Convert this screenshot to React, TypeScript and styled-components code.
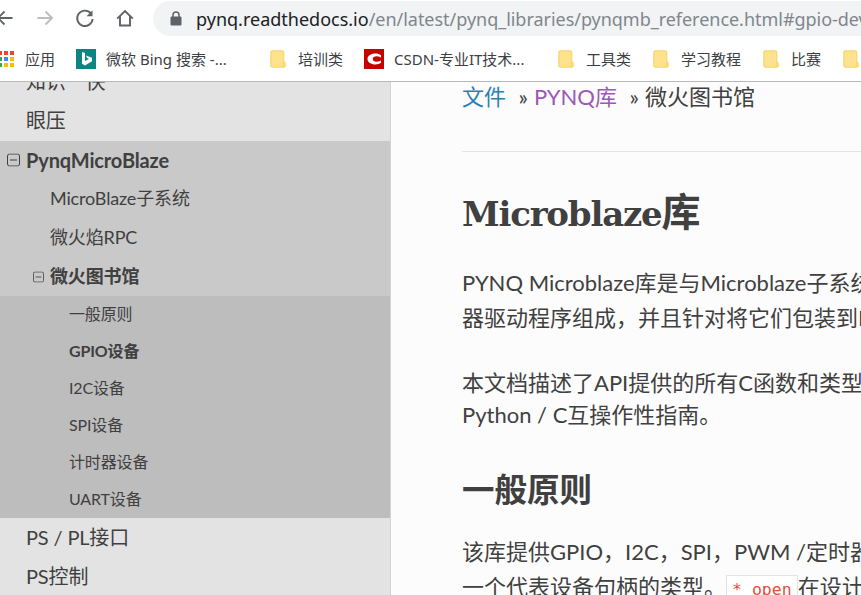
import React from 'react';
import styled, { createGlobalStyle } from 'styled-components';

const UI_FONT = '"Noto Sans", "Noto Sans CJK SC", sans-serif';
const DOC_FONT = 'Lato, "Noto Sans CJK SC", sans-serif';

const GlobalStyle = createGlobalStyle`
   html,
   body {
      margin: 0;
      height: 100%;
      overflow: hidden;
      background: #fcfcfc;
   }
`;

const folders = ['工具类', '学习教程', '比赛'];

const Folder = () => (
   <FolderIcon viewBox="0 0 16 18">
      <path
         d="M2 .8h10.5c.8 0 1.3.5 1.3 1.3v10h.4c.8 0 1 .5 1 1.2v2.9c0 .7-.5 1-1 1H2c-.8 0-1.2-.5-1.2-1.2V2C.8 1.3 1.2.8 2 .8z"
         fill="#fee28d"
         stroke="#f6d365"
         strokeWidth="1"
      />
      <path d="M13.2 16.5v-3c0-.7.3-1.2 1-1.2" fill="none" stroke="#f6d365" strokeWidth="1" />
   </FolderIcon>
);

const FoldMark = ({ small }: { small?: boolean }) => (
   <FoldIcon $small={small} viewBox="0 0 13 13">
      <rect x="0.5" y="0.5" width="12" height="12" rx="2" fill="none" stroke="#404040" strokeWidth="1" />
      <path d="M3 6.5h7" stroke="#404040" strokeWidth="1" />
   </FoldIcon>
);

const App = () => {
   return (
      <Page>
         <GlobalStyle />
         <Toolbar>
            <NavButton>
               <svg width="20" height="20" viewBox="0 0 20 20" fill="none" stroke="#5f6368" strokeWidth="1.9">
                  <path d="M17.5 10H3.5M9.5 3.5L3 10l6.500 6.500" />
               </svg>
            </NavButton>
            <NavButton>
               <svg width="20" height="20" viewBox="0 0 20 20" fill="none" stroke="#bcbec1" strokeWidth="1.9">
                  <path d="M2.500 10h14M10.500 3.500L17 10l-6.500 6.500" />
               </svg>
            </NavButton>
            <NavButton>
               <svg width="20" height="20" viewBox="0 0 20 20" fill="none" stroke="#5f6368" strokeWidth="1.9">
                  <path d="M16 5.600A7.700 7.700 0 1 0 17.600 11" />
                  <path d="M17.500 2.200v6h-6" fill="#5f6368" stroke="none" />
               </svg>
            </NavButton>
            <NavButton>
               <svg width="20" height="20" viewBox="0 0 20 20" fill="none" stroke="#5f6368" strokeWidth="1.9">
                  <path d="M2.200 10.600L10 3l7.800 7.600M5 8.500v9h10v-9" />
               </svg>
            </NavButton>
            <AddressBar>
               <LockIcon viewBox="0 0 12 15">
                  <path d="M3 6V4a3 3 0 0 1 6 0v2" fill="none" stroke="#5f6368" strokeWidth="1.5" />
                  <rect x="0.5" y="5.5" width="11" height="9" rx="1.2" fill="#5f6368" />
               </LockIcon>
               <Url>
                  pynq.readthedocs.io<UrlRest>/en/latest/pynq_libraries/pynqmb_reference.html#gpio-devices</UrlRest>
               </Url>
            </AddressBar>
         </Toolbar>

         <BookmarkBar>
            <Bookmark $gap={11}>
               <AppsIcon viewBox="0 0 16 16">
                  <rect x="0" y="0" width="4" height="4" fill="#ea4335" />
                  <rect x="6" y="0" width="4" height="4" fill="#ea4335" />
                  <rect x="12" y="0" width="4" height="4" fill="#ea4335" />
                  <rect x="0" y="6" width="4" height="4" fill="#34a853" />
                  <rect x="6" y="6" width="4" height="4" fill="#4285f4" />
                  <rect x="12" y="6" width="4" height="4" fill="#fbbc05" />
                  <rect x="0" y="12" width="4" height="4" fill="#34a853" />
                  <rect x="6" y="12" width="4" height="4" fill="#fbbc05" />
                  <rect x="12" y="12" width="4" height="4" fill="#fbbc05" />
               </AppsIcon>
               <BookmarkLabel>应用</BookmarkLabel>
            </Bookmark>
            <Bookmark $gap={10}>
               <SiteIcon viewBox="0 0 20 20">
                  <rect width="20" height="20" fill="#0b8484" />
                  <path d="M6 3l3 1v8l4-2-2-1-1-2.600 6 2.400v3.400L9 16.500l-3-1.800z" fill="#fff" />
               </SiteIcon>
               <BookmarkLabel $truncated>微软 Bing 搜索 -...</BookmarkLabel>
            </Bookmark>
            <Bookmark $gap={12}>
               <Folder />
               <BookmarkLabel>培训类</BookmarkLabel>
            </Bookmark>
            <Bookmark $gap={10}>
               <SiteIcon viewBox="0 0 20 20">
                  <rect width="20" height="20" fill="#c70000" />
                  <path d="M17 6.200C15.500 5 13.500 4.500 11.500 4.500 7 4.500 3.500 6.800 3.500 10s3.500 5.500 8 5.500c2 0 4-.5 5.500-1.700v-2.300c-1.500.9-3 1.300-4.600 1.300-2 0-3.600-1-3.600-2.800s1.600-2.800 3.600-2.800c1.600 0 3.100.4 4.600 1.300z" fill="#fff" />
               </SiteIcon>
               <BookmarkLabel $truncated>CSDN-专业IT技术...</BookmarkLabel>
            </Bookmark>
            <FolderGroup>
               {folders.map((label) => (
                  <Bookmark key={label} $gap={12}>
                     <Folder />
                     <BookmarkLabel>{label}</BookmarkLabel>
                  </Bookmark>
               ))}
               <Bookmark $gap={12}>
                  <Folder />
               </Bookmark>
            </FolderGroup>
         </BookmarkBar>

         <Body>
            <Sidebar>
               <TopList>
                  <TopItem>知识一快</TopItem>
                  <TopItem>眼压</TopItem>
               </TopList>
               <OpenSection>
                  <SectionHeader>
                     <FoldMark />
                     PynqMicroBlaze
                  </SectionHeader>
                  <SubItem>MicroBlaze子系统</SubItem>
                  <SubItem>微火焰RPC</SubItem>
                  <SubItem $bold>
                     <FoldMark small />
                     微火图书馆
                  </SubItem>
               </OpenSection>
               <DeepSection>
                  <DeepItem>一般原则</DeepItem>
                  <DeepItem $bold>GPIO设备</DeepItem>
                  <DeepItem>I2C设备</DeepItem>
                  <DeepItem>SPI设备</DeepItem>
                  <DeepItem>计时器设备</DeepItem>
                  <DeepItem>UART设备</DeepItem>
               </DeepSection>
               <TopItem>PS / PL接口</TopItem>
               <TopItem>PS控制</TopItem>
            </Sidebar>

            <Content>
               <Breadcrumbs>
                  <CrumbLink $color="#2980b9">文件</CrumbLink>
                  <Separator>»</Separator>
                  <CrumbLink $color="#9b59b6">PYNQ库</CrumbLink>
                  <Separator>»</Separator>
                  微火图书馆
               </Breadcrumbs>
               <Rule />
               <Title>
                  <TitleLatin>Microblaze</TitleLatin>库
               </Title>
               <Paragraph $top={26} $leading={35}>
                  PYNQ Microblaze库是与Microblaze子系统进行交互的主要方式
                  <br />
                  器驱动程序组成，并且针对将它们包装到IP中进行了优化
               </Paragraph>
               <Paragraph $top={32} $leading={32}>
                  本文档描述了API提供的所有C函数和类型，并提供了
                  <br />
                  Python / C互操作性指南。
               </Paragraph>
               <Heading>一般原则</Heading>
               <Paragraph $top={21} $leading={35}>
                  该库提供GPIO，I2C，SPI，PWM /定时器和UART功能
                  <br />
                  一个代表设备句柄的类型。<Code>* open</Code>在设计中打开设备
               </Paragraph>
            </Content>
         </Body>
      </Page>
   );
};

const Page = styled.div`
   display: flex;
   flex-direction: column;
   width: 861px;
   height: 595px;
   overflow: hidden;
   background: #fff;
`;

const Toolbar = styled.div`
   display: flex;
   align-items: flex-start;
   flex: none;
   height: 40px;
   margin-left: -15px;
`;

const NavButton = styled.div`
   display: flex;
   align-items: center;
   justify-content: center;
   flex: none;
   width: 40px;
   height: 36px;
`;

const AddressBar = styled.div`
   display: flex;
   align-items: center;
   flex: none;
   width: 760px;
   height: 35px;
   margin: 1px 0 0 8px;
   padding-left: 17px;
   border-radius: 18px;
   background: #f1f3f4;
`;

const LockIcon = styled.svg`
   flex: none;
   width: 12px;
   height: 15px;
`;

const Url = styled.div`
   margin-left: 14px;
   font-family: ${UI_FONT};
   font-size: 18px;
   white-space: nowrap;
   color: #202124;
`;

const UrlRest = styled.span`
   letter-spacing: -0.03px;
   color: #80868b;
`;

const BookmarkBar = styled.div`
   display: flex;
   align-items: center;
   flex: none;
   box-sizing: border-box;
   height: 42px;
   margin-left: -2px;
   padding-bottom: 4px;
   gap: 21px;
   border-bottom: 1px solid #b9b9b9;
   background: #fff;
`;

const FolderGroup = styled.div`
   display: flex;
   align-items: center;
   flex: none;
   gap: 22px;
`;

const Bookmark = styled.div<{ $gap: number }>`
   display: flex;
   align-items: center;
   flex: none;
   gap: ${(p) => p.$gap}px;
`;

const BookmarkLabel = styled.span<{ $truncated?: boolean }>`
   width: ${(p) => (p.$truncated ? '143px' : 'auto')};
   font-family: ${UI_FONT};
   font-size: 15px;
   white-space: nowrap;
   color: #3c4043;
`;

const AppsIcon = styled.svg`
   flex: none;
   width: 16px;
   height: 16px;
`;

const SiteIcon = styled.svg`
   flex: none;
   width: 20px;
   height: 20px;
`;

const FolderIcon = styled.svg`
   flex: none;
   width: 16px;
   height: 18px;
`;

const Body = styled.div`
   display: flex;
   flex: 1;
   min-height: 0;
`;

const Sidebar = styled.nav`
   flex: none;
   width: 390px;
   overflow: hidden;
   border-right: 1px solid #d4d4d4;
   background: #e3e3e3;
   font-family: ${DOC_FONT};
   letter-spacing: -0.15px;
   color: #404040;
`;

const TopList = styled.div`
   margin-top: -20px;
   padding-bottom: 1px;
`;

const FoldIcon = styled.svg<{ $small?: boolean }>`
   position: absolute;
   left: ${(p) => (p.$small ? '33px' : '7px')};
   top: 50%;
   width: ${(p) => (p.$small ? '11px' : '13px')};
   height: ${(p) => (p.$small ? '11px' : '13px')};
   transform: translateY(-50%);
`;

const TopItem = styled.div`
   position: relative;
   display: flex;
   align-items: center;
   box-sizing: border-box;
   height: 39px;
   padding: 0 0 3px 26px;
   font-size: 20px;
`;

const SectionHeader = styled(TopItem)`
   height: 38px;
   padding-bottom: 1px;
   font-weight: 700;
`;

const OpenSection = styled.div`
   background: #c9c9c9;
`;

const SubItem = styled.div<{ $bold?: boolean }>`
   position: relative;
   display: flex;
   align-items: center;
   box-sizing: border-box;
   height: 39px;
   padding: 0 0 4px 50px;
   font-size: 18px;
   font-weight: ${(p) => (p.$bold ? 700 : 400)};
`;

const DeepSection = styled.div`
   background: #bdbdbd;
`;

const DeepItem = styled.div<{ $bold?: boolean }>`
   display: flex;
   align-items: center;
   box-sizing: border-box;
   height: 37px;
   padding: 0 0 4px 69px;
   font-size: 16px;
   font-weight: ${(p) => (p.$bold ? 700 : 400)};
`;

const Content = styled.main`
   flex: 1;
   min-width: 0;
   padding-left: 71px;
   overflow: hidden;
   background: #fcfcfc;
   font-family: ${DOC_FONT};
   color: #404040;
   white-space: nowrap;
`;

const Breadcrumbs = styled.div`
   height: 32px;
   font-size: 22px;
   line-height: 30px;
`;

const CrumbLink = styled.span<{ $color: string }>`
   color: ${(p) => p.$color};
`;

const Separator = styled.span`
   margin: 0 6px 0 12.5px;
`;

const Rule = styled.div`
   height: 1px;
   margin: 37px 0 0;
   background: #e1e4e5;
`;

const Title = styled.h1`
   margin: 35px 0 0;
   font-family: "DejaVu Serif", "Noto Sans CJK SC", serif;
   font-size: 39px;
   font-weight: 700;
   line-height: 50px;
`;

const TitleLatin = styled.span`
   font-size: 34px;
   letter-spacing: -1.2px;
`;

const Paragraph = styled.p<{ $top: number; $leading: number }>`
   margin: ${(p) => p.$top}px 0 0;
   font-size: 22px;
   line-height: ${(p) => p.$leading}px;
`;

const Heading = styled.h2`
   margin: 38px 0 0;
   font-family: Roboto, "Noto Sans CJK SC", sans-serif;
   font-size: 32.5px;
   font-weight: 700;
   line-height: 44px;
`;

const Code = styled.code`
   padding: 4px 5px 2px;
   border: 1px solid #e1e4e5;
   background: #fff;
   font-family: "DejaVu Sans Mono", monospace;
   font-size: 16.5px;
   color: #e74c3c;
`;

export default App;
